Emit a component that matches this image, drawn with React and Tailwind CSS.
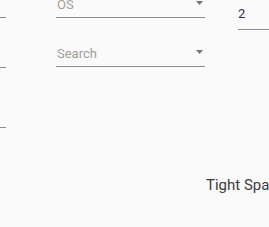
import React from "react";

function Arrow({ className }) {
  return (
    <svg width="7" height="4" viewBox="0 0 7 4" className={className}>
      <path d="M0 0 L7 0 L3.5 4 Z" fill="#757575" />
    </svg>
  );
}

function SelectField({ label, className }) {
  return (
    <div
      className={
        "w-[149px] h-[18px] box-border border-b border-[#8c8c8c] flex justify-between pl-px pr-[2px] " +
        className
      }
    >
      <span className="self-end pb-[5px] text-[13px] leading-[15px] text-[#a39e99]">{label}</span>
      <Arrow className="self-end mb-[12px]" />
    </div>
  );
}

export default function App() {
  return (
    <div className="min-h-screen w-full bg-[#fafafa] overflow-hidden font-['Roboto','Liberation_Sans',sans-serif]">
      <div className="flex items-start">
        <div className="w-[6px] shrink-0 flex flex-col">
          <div className="mt-[17px] h-px bg-[#8c8c8c]" />
          <div className="mt-[49px] h-px bg-[#8c8c8c]" />
          <div className="mt-[59px] h-px bg-[#8c8c8c]" />
        </div>
        <div className="ml-[50px] flex flex-col shrink-0">
          <SelectField label="OS" />
          <SelectField label="Search" className="mt-[31px]" />
        </div>
        <div className="ml-[33px] w-[40px] shrink-0 h-[30px] box-border border-b border-[#8c8c8c] flex items-end">
          <span className="pb-[7px] text-[13px] leading-[16px] text-[#37344a]">2</span>
        </div>
      </div>

      <div className="mt-[47px] pl-[206px] whitespace-nowrap text-[15px] leading-[20px] text-[#3d3d3d]">
        Tight Spacing
      </div>

      <div className="mt-[35px] pl-[31px] whitespace-nowrap text-[14px] leading-[18px] text-[#444444]">
        Default
      </div>
    </div>
  );
}
